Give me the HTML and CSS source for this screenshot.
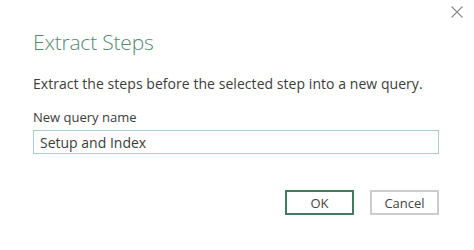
FILE: index.html
```html
<!DOCTYPE html>
<html lang="en">
<head>
    <meta charset="UTF-8">
    <title>Extract Steps</title>
    <link rel="stylesheet" href="styles.css">
</head>
<body>
<div class="dialog">
    <div class="dialog-top">
        <button class="close-button" title="Close">
            <svg width="12" height="12" viewBox="0 0 12 12">
                <path d="M0.5 0.5 L11.5 11.5 M11.5 0.5 L0.5 11.5" stroke="#8a8a8a" stroke-width="1.1" fill="none"/>
            </svg>
        </button>
    </div>
    <h1 class="dialog-title">Extract Steps</h1>
    <p class="dialog-text">Extract the steps before the selected step into a new query.</p>
    <label class="field-label" for="query-name">New query name</label>
    <input type="text" id="query-name" class="field-input" value="Setup and Index">
    <div class="dialog-footer">
        <button class="btn btn-primary">OK</button>
        <button class="btn">Cancel</button>
    </div>
</div>
</body>
</html>
```

FILE: styles.css
```css
body {
    margin: 0;
    background: #fff;
    font-family: "Open Sans", "Noto Sans", sans-serif;
    color: #3c3c3c;
}
.dialog {
    width: 474px;
    height: 250px;
    box-sizing: border-box;
    padding: 0 35px 0 33px;
    display: flex;
    flex-direction: column;
}
.dialog-top {
    height: 27px;
    display: flex;
    justify-content: flex-end;
    margin-right: -24px;
}
.close-button {
    border: none;
    background: none;
    padding: 0;
    margin-top: 6px;
    width: 12px;
    height: 12px;
    display: flex;
}
.dialog-title {
    margin: 0;
    font-size: 21px;
    font-weight: 300;
    line-height: 30px;
    letter-spacing: -0.2px;
    color: #568a72;
}
.dialog-text {
    margin: 17px 0 0;
    font-size: 14px;
    line-height: 20px;
    letter-spacing: 0.05px;
}
.field-label {
    margin-top: 14px;
    font-size: 13px;
    line-height: 18px;
}
.field-input {
    margin-top: 4px;
    height: 24px;
    box-sizing: border-box;
    border: 1px solid #a9d3bf;
    padding: 0 6px;
    font-family: inherit;
    font-size: 14px;
    color: #3c3c3c;
    outline: none;
}
.dialog-footer {
    margin-top: 36px;
    display: flex;
    justify-content: flex-end;
    gap: 16px;
}
.btn {
    width: 69px;
    height: 25px;
    box-sizing: border-box;
    border: 2px solid #cccccc;
    background: #fff;
    font-family: inherit;
    font-size: 13px;
    color: #444;
    padding: 0;
}
.btn-primary {
    border-color: #3f7d5e;
}
```
